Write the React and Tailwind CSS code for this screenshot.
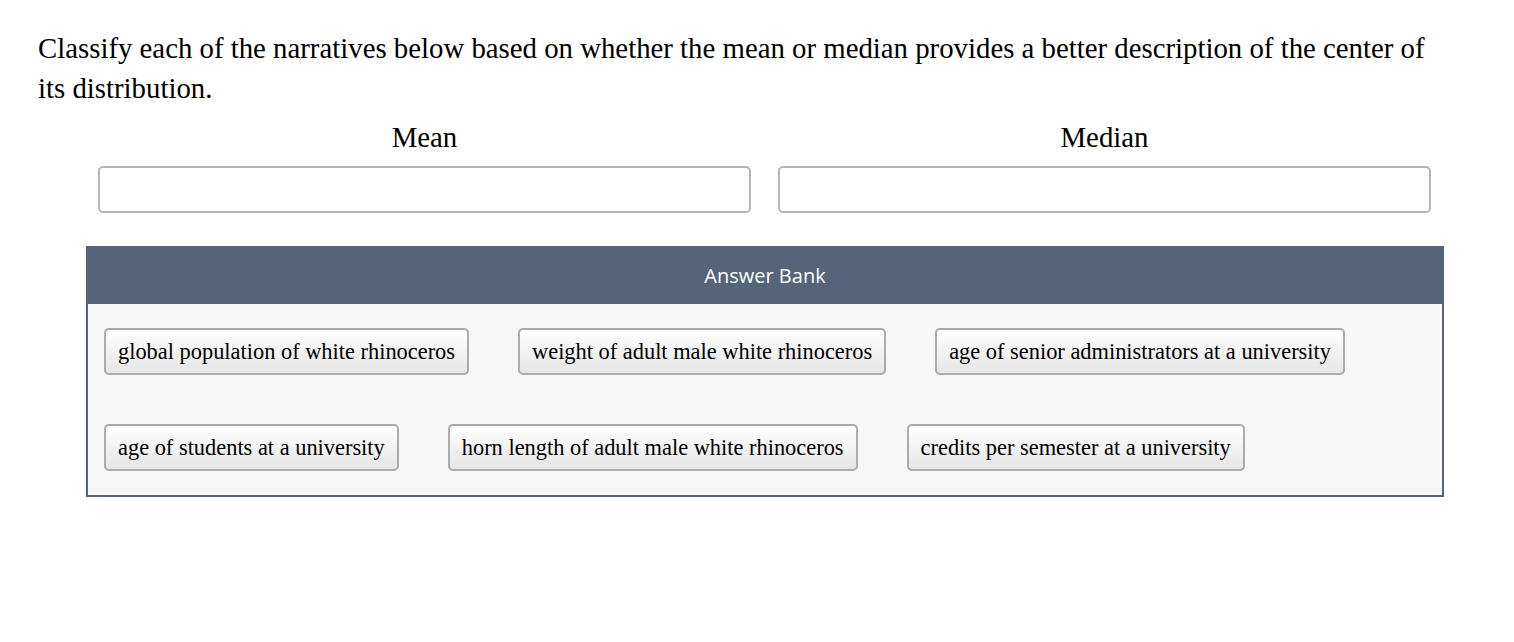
export default function App() {
  const items = [
    "global population of white rhinoceros",
    "weight of adult male white rhinoceros",
    "age of senior administrators at a university",
    "age of students at a university",
    "horn length of adult male white rhinoceros",
    "credits per semester at a university",
  ];
  return (
    <div className="w-[1514px] h-[642px] bg-white text-black" style={{ fontFamily: '"Liberation Serif", "Times New Roman", serif' }}>
      <div className="pl-[38px] pt-[28px]">
        <p className="w-[1410px] text-[28.8px] leading-[40px]">
          Classify each of the narratives below based on whether the mean or median provides a better description of the center of its distribution.
        </p>
      </div>
      <div className="flex gap-[27px] pl-[98px] mt-[13px]">
        {["Mean", "Median"].map((t) => (
          <div key={t} className="w-[653px] flex flex-col items-center">
            <div className="text-[28.8px] leading-[32px] h-[32px]">{t}</div>
            <div className="mt-[13px] w-full h-[47px] border-2 border-[#b5b5b5] rounded-[5px] bg-white"></div>
          </div>
        ))}
      </div>
      <div className="ml-[86px] mt-[33px] w-[1358px] border-2 border-[#546479]">
        <div className="h-[56px] bg-[#546479] flex items-center justify-center text-white text-[20px]" style={{ fontFamily: '"Open Sans", sans-serif' }}>
          Answer Bank
        </div>
        <div className="bg-[#f7f7f7] flex flex-wrap gap-[49px] pl-[16px] pr-[16px] pt-[24px] pb-[24px]">
          {items.map((t) => (
            <div
              key={t}
              className="h-[47px] flex items-center px-[12px] border-2 border-[#ababab] rounded-[5px] bg-gradient-to-b from-white to-[#e6e6e6] text-[22.4px] whitespace-nowrap"
            >
              {t}
            </div>
          ))}
        </div>
      </div>
    </div>
  );
}
